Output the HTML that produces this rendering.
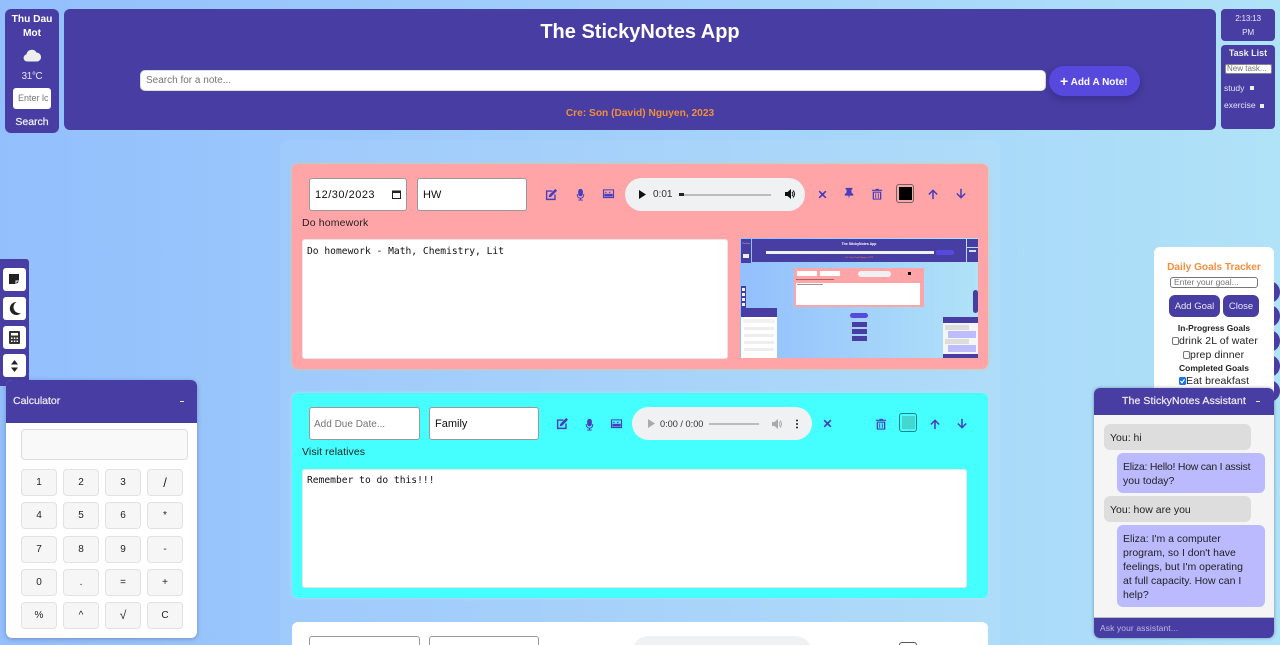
<!DOCTYPE html>
<html><head><meta charset="utf-8"><title>The StickyNotes App</title>
<style>
*{box-sizing:border-box}
html,body{margin:0;padding:0;width:1280px;height:645px;overflow:hidden}
#w{position:absolute;left:0;top:0;width:1280px;height:645px;overflow:hidden;background:linear-gradient(90deg,#93bffd 0%,#a2d0fa 50%,#b0e2f8 100%);font-family:"Liberation Sans",sans-serif;color:#111}
.a{position:absolute}
.p{background:#483da3}
.t{position:absolute;white-space:nowrap;line-height:1}
.c{text-align:center}
.inp{position:absolute;background:#fff;border:1px solid #999;border-radius:3px;font-size:11px;line-height:33px;padding-left:5px;color:#111}
.ph{color:#757575;font-size:10px;padding-left:4px}
.au{position:absolute;width:180px;height:33px;border-radius:17px;background:#f0f1f3}
.ta{position:absolute;background:#fff;border:1px solid #e6e6e6;border-radius:3px;font:9.65px/1 "DejaVu Sans Mono","Liberation Mono",monospace;padding:6px 4px;color:#111}
.ic{position:absolute;fill:#483dbd;stroke:none}
.k{position:absolute;width:36px;height:27px;background:#f6f6f6;border:1px solid #e2e2e2;border-radius:4px;font-size:10px;line-height:25px;text-align:center;color:#222}
.sb{position:absolute;left:3px;width:23px;height:23px;background:#fff;border-radius:3px}
.dot{position:absolute;left:1258px;width:22px;height:22px;border-radius:50%;background:#483da3}
.b{position:absolute;font-size:10.5px;line-height:14.2px;border-radius:6px;color:#222;white-space:nowrap;padding:6.5px 6px}
.m{-webkit-text-stroke:.25px currentColor}
</style></head><body><div id="w">
<svg width="0" height="0" style="position:absolute"><defs>
<symbol id="edit" viewBox="0 0 14 14"><path d="M1 2.500h7v1.500H2.500v7.500H10V7h1.500v6H1z"/><path d="M4.500 7.500 11 1l2 2-6.500 6.500-2.500.5z"/></symbol>
<symbol id="mic" viewBox="0 0 14 14"><rect x="4.500" y="1" width="5" height="8" rx="2.500"/><path d="M3 6.500h1v1a3 3 0 0 0 6 0v-1h1v1a4 4 0 0 1-3.400 3.900V12.500H9.500V13.500H4.500V12.500H6.400V11.400A4 4 0 0 1 3 7.500z"/></symbol>
<symbol id="img" viewBox="0 0 14 14"><path fill-rule="evenodd" d="M1 2.500h12v9.500H1zM2.200 3.700v7.100h9.600V3.700z"/><path d="M2.500 7.300h9v3h-9z"/><path d="M3 5.200h2v1H3z"/><path d="M7 6.500 9 4.500v2z"/></symbol>
<symbol id="x" viewBox="0 0 14 14"><path d="M3.400 2 7 5.400 10.600 2 12 3.400 8.600 7 12 10.600 10.600 12 7 8.600 3.400 12 2 10.600 5.400 7 2 3.400z"/></symbol>
<symbol id="pin" viewBox="0 0 14 14"><path d="M3 1h8v1.500L9.700 3.500 10 6.500 12 8.500V10H7.700L7 13.500 6.300 10H2V8.500L4 6.500 4.300 3.500 3 2.500z"/></symbol>
<symbol id="tr" viewBox="0 0 14 14"><path fill-rule="evenodd" d="M5 1h4l.6 1H13v1.400H1V2h4.400zM2 4.300h10V13.500H2zM3.500 5.500v6.800h7V5.500z"/><path d="M5 6.200h1v5.300H5zM8 6.200h1v5.300H8z"/></symbol>
<symbol id="up" viewBox="0 0 14 14"><path d="M7 1.500 12.500 7 11.300 8.100 7.900 4.800V13H6.100V4.800L2.700 8.100 1.500 7z"/></symbol>
<symbol id="dn" viewBox="0 0 14 14"><path d="M7 12.500 1.500 7 2.700 5.900 6.100 9.200V1H7.900V9.200L11.300 5.900 12.500 7z"/></symbol>
</defs></svg>

<!-- main container -->
<div class="a" style="left:280px;top:140px;width:720px;height:505px;background:rgba(255,255,255,.06);border-radius:8px 8px 0 0"></div>

<!-- weather -->
<div class="a p" style="left:5px;top:9px;width:54px;height:124px;border-radius:6px"></div>
<div class="t c" style="left:5px;width:54px;top:12.500px;color:#fff;font-size:10.200px;font-weight:700;line-height:14px;white-space:normal">Thu Dau Mot</div>
<svg class="a" style="left:22px;top:47px" width="20" height="15" viewBox="0 0 20 15"><path fill="#eee" d="M5 14.500a3.600 3.600 0 0 1-.6-7.100A5.500 5.500 0 0 1 14.600 5.600 4.500 4.500 0 0 1 15.500 14.500z"/></svg>
<div class="t c" style="left:5px;width:54px;top:71.500px;color:#e8e6f6;font-size:9.800px;letter-spacing:-.3px">31°C</div>
<div class="a" style="left:13px;top:88px;width:38px;height:21px;background:#fff;border-radius:3px;overflow:hidden;color:#757575;font-size:9px;line-height:21px;padding-left:5px;white-space:nowrap">Enter lc</div>
<div class="t c m" style="left:5px;width:54px;top:117px;color:#eee;font-size:10.500px">Search</div>

<!-- header -->
<div class="a p" style="left:64px;top:9px;width:1152px;height:121px;border-radius:6px"></div>
<div class="t c" style="left:64px;width:1152px;top:22px;color:#fff;font-size:20px;font-weight:700">The StickyNotes App</div>
<div class="a" style="left:140px;top:70px;width:906px;height:21px;background:#fff;border-radius:5px;border:1px solid #ddd;color:#757575;font-size:10px;line-height:19px;padding-left:5px">Search for a note...</div>
<div class="a" style="left:1049px;top:66px;width:91px;height:30px;background:#5749dd;border-radius:15px;box-shadow:0 3px 8px rgba(30,20,90,.35);color:#fff;font-size:10px;font-weight:700;line-height:30px;padding-left:11px;white-space:nowrap"><span style="font-size:14px;vertical-align:-1px">+</span> Add A Note!</div>
<div class="t c" style="left:64px;width:1152px;top:108.500px;color:#f08f3c;font-size:10.200px;font-weight:700">Cre: Son (David) Nguyen, 2023</div>

<!-- clock -->
<div class="a p" style="left:1221px;top:9px;width:54px;height:32px;border-radius:4px"></div>
<div class="t c" style="left:1221px;width:54px;top:11.500px;color:#e6e4f6;font-size:8.200px;line-height:14px;white-space:normal;letter-spacing:-.25px">2:13:13<br>PM</div>
<!-- tasks -->
<div class="a p" style="left:1221px;top:45px;width:54px;height:84px;border-radius:4px"></div>
<div class="t c" style="left:1221px;width:54px;top:49px;color:#eee;font-size:9px;font-weight:700">Task List</div>
<div class="a" style="left:1225px;top:64px;width:47px;height:10px;background:#fff;border:1px solid #888;border-radius:2px;color:#757575;font-size:8px;line-height:8px;padding-left:1px;white-space:nowrap;overflow:hidden">New task...</div>
<div class="t" style="left:1224px;top:84px;color:#e6e4f6;font-size:8.500px">study</div>
<div class="a" style="left:1250px;top:86px;width:4px;height:4px;background:#eee"></div>
<div class="t" style="left:1224px;top:101px;color:#e6e4f6;font-size:8.500px">exercise</div>
<div class="a" style="left:1260px;top:103.500px;width:4px;height:4px;background:#eee"></div>

<!-- note 1 -->
<div class="a" style="left:292px;top:164px;width:696px;height:205px;background:#ffa5a7;border-radius:6px;box-shadow:0 0 3px #e8c888"></div>
<div class="inp" style="left:309px;top:178px;width:98px;height:33px;letter-spacing:.5px">12/30/2023</div>
<svg class="a" style="left:391px;top:189px" width="11" height="11" viewBox="0 0 11 11"><path fill="#222" fill-rule="evenodd" d="M1 1.500h9V10H1zM2 4v5h7V4z"/></svg>
<div class="inp" style="left:417px;top:178px;width:110px;height:33px">HW</div>
<svg class="ic" style="left:544.500px;top:187.500px" width="13" height="13"><use href="#edit"/></svg>
<svg class="ic" style="left:573.500px;top:187.500px" width="13" height="13"><use href="#mic"/></svg>
<svg class="ic" style="left:601.500px;top:187px" width="13" height="13"><use href="#img"/></svg>
<div class="au" style="left:625px;top:178px"></div>
<svg class="a" style="left:638px;top:190px" width="8" height="9"><path d="M1 0l7 4.500-7 4.500z" fill="#111"/></svg>
<div class="t" style="left:653px;top:190px;font-size:10px;color:#333">0:01</div>
<div class="a" style="left:679px;top:193.500px;width:92px;height:2px;background:#bbb"></div>
<div class="a" style="left:679px;top:193px;width:5px;height:3px;background:#222"></div>
<svg class="a" style="left:784px;top:188px" width="12" height="12" viewBox="0 0 12 12"><path fill="#111" d="M1 4h2.500L7 1v10L3.500 8H1z"/><path fill="none" stroke="#111" d="M8 4a3 3 0 0 1 0 4M9 2.500a5 5 0 0 1 0 7"/></svg>
<svg class="ic" style="left:816.500px;top:188.500px" width="11" height="11"><use href="#x"/></svg>
<svg class="ic" style="left:843px;top:187px" width="12" height="12"><use href="#pin"/></svg>
<svg class="ic" style="left:871px;top:188px" width="12" height="12"><use href="#tr"/></svg>
<div class="a" style="left:896px;top:184px;width:18px;height:18.500px;border:1.500px solid #666;border-radius:3px;padding:1.500px"><div style="width:100%;height:100%;background:#000"></div></div>
<svg class="ic" style="left:927px;top:188px" width="12" height="12"><use href="#up"/></svg>
<svg class="ic" style="left:955px;top:188px" width="12" height="12"><use href="#dn"/></svg>
<div class="t" style="left:302px;top:218px;font-size:10.500px;color:#222;letter-spacing:.15px">Do homework</div>
<div class="ta" style="left:302px;top:239px;width:426px;height:120px;padding-top:7px">Do homework - Math, Chemistry, Lit</div>

<!-- thumbnail -->
<div class="a" style="left:740px;top:238px;width:238px;height:120px;overflow:hidden;background:linear-gradient(90deg,#93bffd,#b0e2f8)">
 <div class="a p" style="left:1px;top:1px;width:10px;height:24px"></div>
 <div class="t c" style="left:1px;width:10px;top:5px;color:#ddd;font-size:2px">Thu Dau</div>
 <div class="a" style="left:3px;top:16px;width:6px;height:4px;background:#eee"></div>
 <div class="a p" style="left:12px;top:1px;width:214px;height:23px"></div>
 <div class="a p" style="left:227px;top:1px;width:11px;height:8px"></div>
 <div class="a p" style="left:227px;top:10px;width:11px;height:14px"></div>
 <div class="a" style="left:229px;top:12px;width:7px;height:1.500px;background:#ddd"></div>
 <div class="t c" style="left:12px;width:214px;top:5px;color:#fff;font-size:3.500px;font-weight:700">The StickyNotes App</div>
 <div class="a" style="left:26px;top:13px;width:168px;height:3px;background:#f0f0f0"></div>
 <div class="a" style="left:196px;top:12px;width:18px;height:5px;background:#5749dd;border-radius:2px"></div>
 <div class="t c" style="left:12px;width:214px;top:19px;color:#f08f3c;font-size:2px">Cre: Son (David) Nguyen, 2023</div>
 <div class="a" style="left:54px;top:30px;width:130px;height:39px;background:#ffa5a7"></div>
 <div class="a" style="left:57px;top:33px;width:20px;height:5px;background:#fff"></div>
 <div class="a" style="left:80px;top:33px;width:20px;height:5px;background:#fff"></div>
 <div class="a" style="left:118px;top:33px;width:33px;height:6px;background:#f0f1f3;border-radius:3px"></div>
 <div class="a" style="left:168px;top:34px;width:3px;height:3px;background:#000"></div>
 <div class="a" style="left:56px;top:41px;width:38px;height:1px;background:#b06060"></div>
 <div class="a" style="left:56px;top:45px;width:124px;height:22px;background:#fff"></div>
 <div class="a" style="left:57px;top:46px;width:26px;height:1px;background:#999"></div>
 <div class="a p" style="left:1px;top:48px;width:5px;height:22px"></div>
 <div class="a" style="left:2px;top:50px;width:3px;height:3px;background:#f0f0f0"></div>
 <div class="a" style="left:2px;top:55px;width:3px;height:3px;background:#f0f0f0"></div>
 <div class="a" style="left:2px;top:60px;width:3px;height:3px;background:#f0f0f0"></div>
 <div class="a" style="left:2px;top:65px;width:3px;height:3px;background:#f0f0f0"></div>
 <div class="a p" style="left:1px;top:70px;width:36px;height:9px"></div>
 <div class="a" style="left:1px;top:79px;width:36px;height:41px;background:#fff"></div>
 <div class="a" style="left:3px;top:81px;width:32px;height:4px;background:#f2f2f2"></div>
 <div class="a" style="left:4px;top:89px;width:30px;height:3px;background:#eee"></div>
 <div class="a" style="left:4px;top:96px;width:30px;height:3px;background:#eee"></div>
 <div class="a" style="left:4px;top:103px;width:30px;height:3px;background:#eee"></div>
 <div class="a" style="left:4px;top:110px;width:30px;height:3px;background:#eee"></div>
 <div class="a" style="left:110px;top:75px;width:18px;height:5px;background:#5749dd;border-radius:3px"></div>
 <div class="a p" style="left:112px;top:84px;width:15px;height:4.500px"></div>
 <div class="a p" style="left:112px;top:91px;width:15px;height:4.500px"></div>
 <div class="a p" style="left:112px;top:98px;width:15px;height:4.500px"></div>
 <div class="a p" style="left:233px;top:52px;width:5px;height:23px;border-radius:3px"></div>
 <div class="a p" style="left:203px;top:79px;width:35px;height:6px"></div>
 <div class="a" style="left:203px;top:85px;width:35px;height:31px;background:#f5f5f5"></div>
 <div class="a" style="left:205px;top:87px;width:24px;height:5px;background:#ddd"></div>
 <div class="a" style="left:208px;top:93px;width:28px;height:7px;background:#bdbcff"></div>
 <div class="a" style="left:205px;top:101px;width:24px;height:5px;background:#ddd"></div>
 <div class="a" style="left:208px;top:107px;width:28px;height:7px;background:#bdbcff"></div>
 <div class="a p" style="left:203px;top:116px;width:35px;height:4px"></div>
</div>

<!-- note 2 -->
<div class="a" style="left:292px;top:393px;width:696px;height:205px;background:#45ffff;border-radius:6px;box-shadow:0 0 3px #b8e8e8"></div>
<div class="inp ph" style="left:309px;top:407px;width:111px;height:33px">Add Due Date...</div>
<div class="inp" style="left:429px;top:407px;width:110px;height:33px">Family</div>
<svg class="ic" style="left:555.500px;top:417px" width="13" height="13"><use href="#edit"/></svg>
<svg class="ic" style="left:582.500px;top:417.500px" width="13" height="13"><use href="#mic"/></svg>
<svg class="ic" style="left:609.500px;top:417px" width="13" height="13"><use href="#img"/></svg>
<div class="au" style="left:632px;top:407px"></div>
<svg class="a" style="left:647px;top:419px" width="8" height="9"><path d="M1 0l7 4.500-7 4.500z" fill="#aaa"/></svg>
<div class="t" style="left:660px;top:419.500px;font-size:9.200px;color:#333">0:00 / 0:00</div>
<div class="a" style="left:709px;top:423px;width:50px;height:2px;background:#bbb"></div>
<svg class="a" style="left:771px;top:418px" width="12" height="12" viewBox="0 0 12 12"><path fill="#aaa" d="M1 4h2.500L7 1v10L3.500 8H1z"/><path fill="none" stroke="#aaa" d="M8 4a3 3 0 0 1 0 4M9 2.500a5 5 0 0 1 0 7"/></svg>
<svg class="a" style="left:795px;top:419px" width="4" height="10"><circle cx="2" cy="1.500" r="1" fill="#222"/><circle cx="2" cy="5" r="1" fill="#222"/><circle cx="2" cy="8.500" r="1" fill="#222"/></svg>
<svg class="ic" style="left:821.500px;top:418px" width="11" height="11"><use href="#x"/></svg>
<svg class="ic" style="left:875px;top:418px" width="12" height="12"><use href="#tr"/></svg>
<div class="a" style="left:899px;top:413px;width:18px;height:18.500px;border:1.500px solid #1f7f8a;border-radius:3px;padding:1.500px"><div style="width:100%;height:100%;background:#45d6d0"></div></div>
<svg class="ic" style="left:929px;top:418px" width="12" height="12"><use href="#up"/></svg>
<svg class="ic" style="left:956px;top:418px" width="12" height="12"><use href="#dn"/></svg>
<div class="t" style="left:302px;top:447px;font-size:10.500px;color:#222;letter-spacing:.1px">Visit relatives</div>
<div class="ta" style="left:302px;top:469px;width:665px;height:119px">Remember to do this!!!</div>

<!-- note 3 -->
<div class="a" style="left:292px;top:622px;width:696px;height:40px;background:#fff;border-radius:6px"></div>
<div class="inp" style="left:309px;top:636px;width:111px;height:33px"></div>
<div class="inp" style="left:429px;top:636px;width:110px;height:33px"></div>
<div class="au" style="left:632px;top:636px"></div>
<div class="a" style="left:899px;top:642px;width:18px;height:19px;border:1.500px solid #555;border-radius:3px"></div>

<!-- left toolbar -->
<div class="a p" style="left:0;top:259px;width:29px;height:127px;border-radius:0 3px 3px 0"></div>
<div class="sb" style="top:268px"></div>
<svg class="a" style="left:9px;top:274px" width="11" height="11" viewBox="0 0 11 11"><path fill="#222" d="M0 0h10v6.500H6.500V10H0z"/><path fill="#222" d="M7.500 7.500H10L7.500 10z"/></svg>
<div class="sb" style="top:297px"></div>
<svg class="a" style="left:9px;top:302px" width="12" height="13" viewBox="0 0 12 13"><path fill="#222" d="M7.500 0A6.500 6.500 0 1 0 12 11 6 6 0 0 1 7.500 0z"/></svg>
<div class="sb" style="top:326px"></div>
<svg class="a" style="left:9px;top:331px" width="11" height="13" viewBox="0 0 11 13"><path fill="#333" fill-rule="evenodd" d="M1 0h9a1 1 0 0 1 1 1v11a1 1 0 0 1-1 1H1a1 1 0 0 1-1-1V1a1 1 0 0 1 1-1zM2 2v2.500h7V2z"/><g fill="#fff"><rect x="2" y="6.500" width="1.500" height="1.500"/><rect x="4.800" y="6.500" width="1.500" height="1.500"/><rect x="7.500" y="6.500" width="1.500" height="1.500"/><rect x="2" y="9.500" width="1.500" height="1.500"/><rect x="4.800" y="9.500" width="1.500" height="1.500"/><rect x="7.500" y="9.500" width="1.500" height="1.500"/></g></svg>
<div class="sb" style="top:354px"></div>
<svg class="a" style="left:11px;top:360px" width="7" height="12" viewBox="0 0 7 12"><path fill="#222" d="M3.500 0 7 4.500H0zM3.500 12 0 7.500H7z"/></svg>

<!-- calculator -->
<div class="a" style="left:6px;top:380px;width:191px;height:258px;background:#fff;border-radius:6px;box-shadow:0 1px 5px rgba(50,50,90,.35);overflow:hidden">
 <div class="a p" style="left:0;top:0;width:191px;height:43px"></div>
</div>
<div class="t m" style="left:13px;top:396px;color:#e8e6f6;font-size:10.500px">Calculator</div>
<div class="a" style="left:180px;top:400.500px;width:4px;height:1px;background:#e8e6f6"></div>
<div class="a" style="left:21px;top:429px;width:167px;height:31px;background:#f9f9f9;border:1px solid #ddd;border-radius:4px"></div>
<div class="k" style="left:21px;top:469px">1</div><div class="k" style="left:63px;top:469px">2</div><div class="k" style="left:105px;top:469px">3</div><div class="k" style="left:147px;top:469px;font-size:13px">/</div>
<div class="k" style="left:21px;top:502px">4</div><div class="k" style="left:63px;top:502px">5</div><div class="k" style="left:105px;top:502px">6</div><div class="k" style="left:147px;top:502px">*</div>
<div class="k" style="left:21px;top:536px">7</div><div class="k" style="left:63px;top:536px">8</div><div class="k" style="left:105px;top:536px">9</div><div class="k" style="left:147px;top:536px">-</div>
<div class="k" style="left:21px;top:569px">0</div><div class="k" style="left:63px;top:569px">.</div><div class="k" style="left:105px;top:569px">=</div><div class="k" style="left:147px;top:569px">+</div>
<div class="k" style="left:21px;top:602px">%</div><div class="k" style="left:63px;top:602px">^</div><div class="k" style="left:105px;top:602px;font-size:12px">√</div><div class="k" style="left:147px;top:602px">C</div>

<!-- right dots -->
<div class="dot" style="top:281px"></div><div class="dot" style="top:305px"></div><div class="dot" style="top:330px"></div><div class="dot" style="top:355px"></div><div class="dot" style="top:380px"></div>

<!-- goals -->
<div class="a" style="left:1154px;top:247px;width:120px;height:150px;background:#fff;border-radius:6px"></div>
<div class="t c" style="left:1154px;width:120px;top:263px;color:#f58f3e;font-size:10.100px;font-weight:700">Daily Goals Tracker</div>
<div class="a" style="left:1170px;top:277px;width:88px;height:11px;border:1px solid #777;border-radius:3px;background:#fff;color:#757575;font-size:8.500px;line-height:9px;padding-left:3px;white-space:nowrap">Enter your goal...</div>
<div class="a p" style="left:1169px;top:295px;width:51px;height:22px;border-radius:6px;color:#e8e6f6;font-size:9.500px;line-height:24px;text-align:center">Add Goal</div>
<div class="a p" style="left:1223px;top:295px;width:36px;height:22px;border-radius:6px;color:#e8e6f6;font-size:9.500px;line-height:24px;text-align:center">Close</div>
<div class="t c" style="left:1154px;width:120px;top:324px;color:#222;font-size:8.400px;font-weight:700">In-Progress Goals</div>
<div class="a" style="left:1172px;top:337px;width:7px;height:8px;border:1px solid #777;border-radius:2px;background:#fff"></div>
<div class="t" style="left:1179px;top:335.500px;color:#222;font-size:10.500px;letter-spacing:.1px">drink 2L of water</div>
<div class="a" style="left:1183px;top:351px;width:7px;height:8px;border:1px solid #777;border-radius:2px;background:#fff"></div>
<div class="t" style="left:1190px;top:349.500px;color:#222;font-size:10.500px;letter-spacing:.1px">prep dinner</div>
<div class="t c" style="left:1154px;width:120px;top:364px;color:#222;font-size:8.500px;font-weight:700">Completed Goals</div>
<svg class="a" style="left:1179px;top:377px" width="7" height="8" viewBox="0 0 7 8"><rect width="7" height="8" rx="1.500" fill="#1a73e8"/><path d="M1.500 4l1.500 1.800 2.500-3.500" stroke="#fff" fill="none" stroke-width="1.200"/></svg>
<div class="t" style="left:1186px;top:375.500px;color:#222;font-size:10.500px;letter-spacing:.1px">Eat breakfast</div>

<!-- chat -->
<div class="a" style="left:1094px;top:388px;width:180px;height:250px;background:#f5f5f5;border-radius:6px;box-shadow:0 0 3px rgba(60,60,100,.5);overflow:hidden">
 <div class="a p" style="left:0;top:0;width:180px;height:27px"></div>
 <div class="a p" style="left:0;top:229px;width:180px;height:21px;border-top:1px solid #bbb"></div>
</div>
<div class="t m" style="left:1122px;top:396px;color:#eceaf8;font-size:10.500px;letter-spacing:.1px">The StickyNotes Assistant</div>
<div class="a" style="left:1256px;top:400.500px;width:4px;height:1px;background:#eceaf8"></div>
<div class="b" style="left:1104px;top:424px;width:147px;height:26px;background:#ddd">You: hi</div>
<div class="b" style="left:1117px;top:453px;width:148px;height:40px;background:#bbbaff"><span style="letter-spacing:-.25px">Eliza: Hello! How can I assist</span><br>you today?</div>
<div class="b" style="left:1104px;top:496px;width:147px;height:26px;background:#ddd">You: how are you</div>
<div class="b" style="left:1117px;top:525px;width:148px;height:82px;background:#bbbaff">Eliza: I'm a computer<br>program, so I don't have<br>feelings, but I'm operating<br>at full capacity. How can I<br>help?</div>
<div class="t" style="left:1100px;top:624px;color:#bdb9e0;font-size:8.500px;letter-spacing:.1px">Ask your assistant...</div>
</div></body></html>
